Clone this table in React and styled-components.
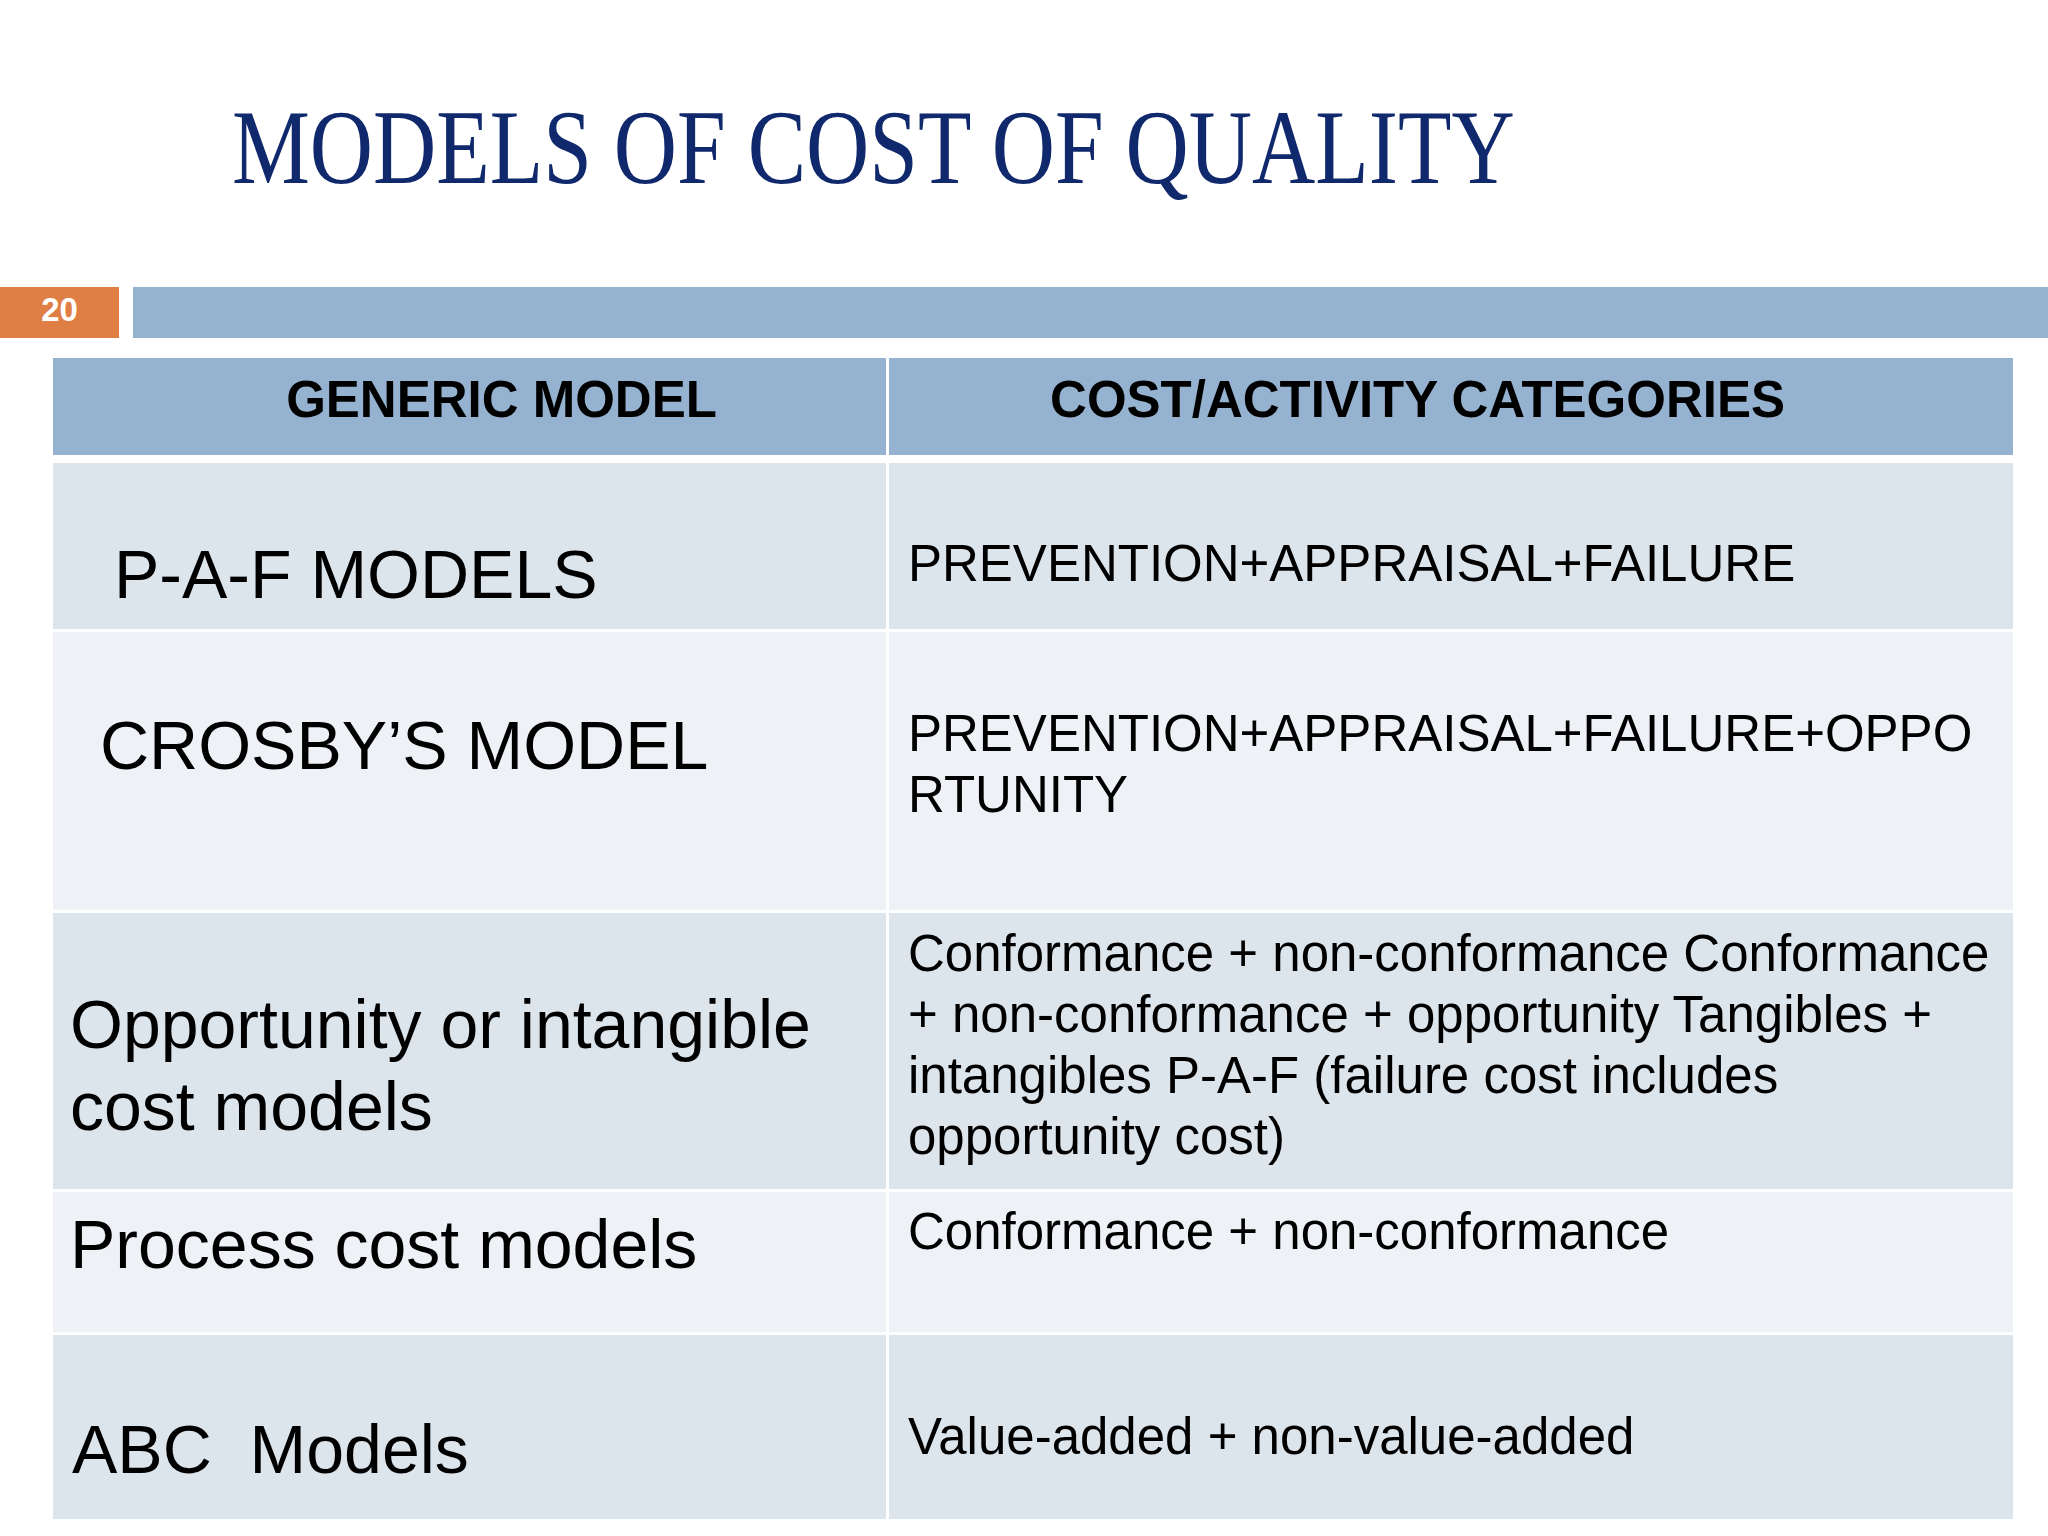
import React from "react";
import styled, { createGlobalStyle } from "styled-components";

const Global = createGlobalStyle`
  html, body { margin: 0; padding: 0; background: #ffffff; }
  body { font-family: "Liberation Sans", Arial, sans-serif; }
`;

const Slide = styled.div`
  width: 2048px;
  height: 1536px;
  background: #ffffff;
  overflow: hidden;
  display: flex;
  flex-direction: column;
`;

const TitleArea = styled.div`
  height: 287px;
  box-sizing: border-box;
  padding: 95px 0 0 232px;
`;

const Title = styled.h1`
  margin: 0;
  font-family: "Liberation Serif", "Times New Roman", serif;
  font-weight: 400;
  font-size: 106px;
  line-height: 106px;
  color: #10296c;
  white-space: nowrap;
  transform: scaleX(0.826);
  transform-origin: left top;
  display: inline-block;
`;

const Band = styled.div`
  display: flex;
  gap: 14px;
  height: 51px;
`;

const PageNum = styled.div`
  width: 119px;
  background: #e07f45;
  color: #ffffff;
  font-weight: 700;
  font-size: 33px;
  line-height: 33px;
  display: flex;
  align-items: center;
  justify-content: center;
  box-sizing: border-box;
  padding-bottom: 7px;
`;

const BandBar = styled.div`
  flex: 1;
  background: #95b3d0;
`;

const Table = styled.div`
  margin: 20px 0 0 53px;
  width: 1960px;
  display: flex;
  flex-direction: column;
  gap: 3px;
`;

const Row = styled.div`
  display: grid;
  grid-template-columns: 833px 1fr;
  column-gap: 3px;
  height: ${(p) => p.$h}px;
  margin-bottom: ${(p) => p.$mb || 0}px;
`;

const HeadCell = styled.div`
  background: #95b3d0;
  color: #000000;
  font-weight: 700;
  font-size: 51px;
  line-height: 51px;
  text-align: center;
  box-sizing: border-box;
  padding: 16px ${(p) => p.$pr || 0}px 0 ${(p) => p.$pl || 0}px;
  white-space: nowrap;
`;

const ModelCell = styled.div`
  background: ${(p) => (p.$light ? "#eef1f6" : "#dce4ec")};
  color: #000000;
  font-size: 68px;
  line-height: 82px;
  box-sizing: border-box;
  padding: ${(p) => p.$pt}px 0 0 ${(p) => p.$pl}px;
  white-space: pre;
`;

const CostCell = styled.div`
  background: ${(p) => (p.$light ? "#eef1f6" : "#dce4ec")};
  color: #000000;
  font-size: 51px;
  line-height: 61px;
  box-sizing: border-box;
  padding: ${(p) => p.$pt}px 0 0 19px;
  white-space: nowrap;
`;

const rows = [
  {
    h: 166,
    light: false,
    model: "P-A-F MODELS",
    mpt: 70,
    mpl: 61,
    cost: ["PREVENTION+APPRAISAL+FAILURE"],
    cpt: 70,
  },
  {
    h: 278,
    light: true,
    model: "CROSBY\u2019S MODEL",
    mpt: 72,
    mpl: 47,
    cost: ["PREVENTION+APPRAISAL+FAILURE+OPPO", "RTUNITY"],
    cpt: 71,
  },
  {
    h: 276,
    light: false,
    model: "Opportunity or intangible\ncost models",
    mpt: 70,
    mpl: 17,
    cost: [
      "Conformance + non-conformance Conformance",
      "+ non-conformance + opportunity Tangibles +",
      "intangibles P-A-F (failure cost includes",
      "opportunity cost)",
    ],
    cpt: 10,
  },
  {
    h: 140,
    light: true,
    model: "Process cost models",
    mpt: 11,
    mpl: 17,
    cost: ["Conformance + non-conformance"],
    cpt: 9,
  },
  {
    h: 184,
    light: false,
    model: "ABC  Models",
    mpt: 73,
    mpl: 19,
    cost: ["Value-added + non-value-added"],
    cpt: 71,
  },
];

export default function App() {
  return (
    <>
      <Global />
      <Slide>
        <TitleArea>
          <Title>MODELS OF COST OF QUALITY</Title>
        </TitleArea>
        <Band>
          <PageNum>20</PageNum>
          <BandBar />
        </Band>
        <Table>
          <Row $h={97} $mb={5}>
            <HeadCell $pl={64}>GENERIC MODEL</HeadCell>
            <HeadCell $pr={67}>COST/ACTIVITY CATEGORIES</HeadCell>
          </Row>
          {rows.map((r, i) => (
            <Row key={i} $h={r.h}>
              <ModelCell $light={r.light} $pt={r.mpt} $pl={r.mpl}>
                {r.model}
              </ModelCell>
              <CostCell $light={r.light} $pt={r.cpt}>
                {r.cost.map((line, j) => (
                  <React.Fragment key={j}>
                    {j > 0 && <br />}
                    {line}
                  </React.Fragment>
                ))}
              </CostCell>
            </Row>
          ))}
        </Table>
      </Slide>
    </>
  );
}
